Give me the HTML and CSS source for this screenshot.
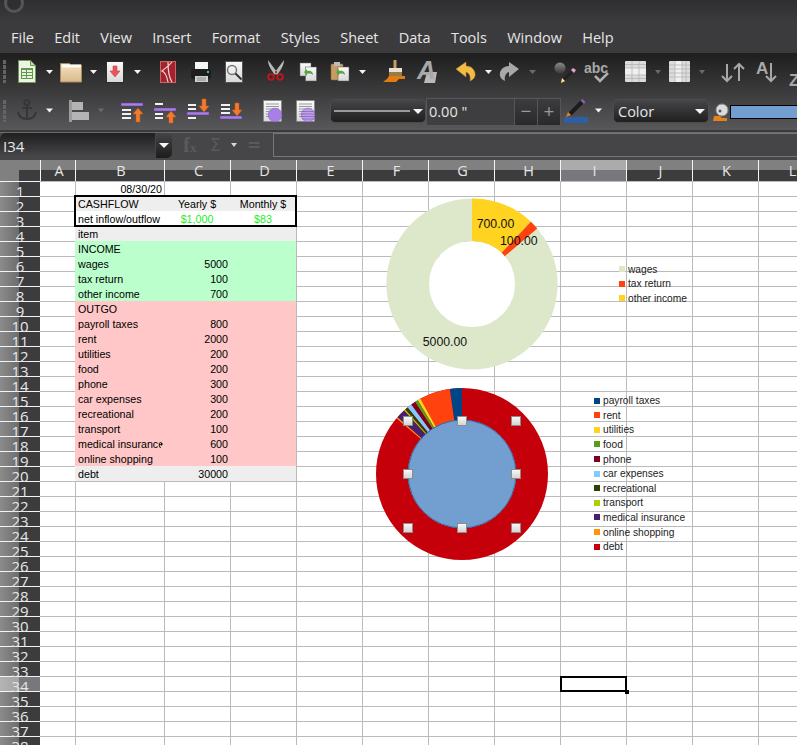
FILE: index.html
```html
<!DOCTYPE html>
<html lang="en">

<head>
    <meta charset="UTF-8">
    <meta name="viewport" content="width=device-width, initial-scale=1.0">
    <title>cashflow - Calc</title>
    <link rel="stylesheet" href="styles.css">
</head>

<body>
    <div class="titlebar"><span class="window-icon"></span></div>

    <nav class="menubar">
        <span>File</span><span>Edit</span><span>View</span><span>Insert</span><span>Format</span><span>Styles</span><span>Sheet</span><span>Data</span><span>Tools</span><span>Window</span><span>Help</span>
    </nav>

    <svg class="defs" width="0" height="0">
        <defs>
            <linearGradient id="page" x1="0" y1="0" x2="0" y2="1"><stop offset="0" stop-color="#fafafa"/><stop offset="1" stop-color="#d8d8d8"/></linearGradient>
            <linearGradient id="folder" x1="0" y1="0" x2="0" y2="1"><stop offset="0" stop-color="#f6e2c2"/><stop offset="1" stop-color="#d9b98c"/></linearGradient>
            <linearGradient id="ball" x1="0" y1="0" x2="0" y2="1"><stop offset="0" stop-color="#8a8a8a"/><stop offset="1" stop-color="#3a3a3a"/></linearGradient>
            <linearGradient id="handle" x1="0" y1="0" x2="0" y2="1"><stop offset="0" stop-color="#fafafa"/><stop offset="1" stop-color="#d2d2d2"/></linearGradient>
        </defs>
    </svg>

    <div class="toolbars">
        <!-- standard toolbar, icons use page coordinates in their viewBox -->
        <div class="toolbar">
            <svg class="tool" width="10" height="38" viewBox="0 53 10 38"><path class="grip" d="M3 60h3v4H3zM3 65h3v4H3zM3 70h3v4H3zM3 75h3v4H3zM3 80h3v3H3z"/></svg>
            <svg class="tool" width="33" height="38" viewBox="10 53 33 38">
                <path d="M18.5 60.5h12l5 5v17h-17z" fill="#eef3e6" stroke="#6c9a56"/>
                <path d="M30.5 60.5v5h5z" fill="#c4d8b4" stroke="#6c9a56"/>
                <rect x="21" y="68" width="12" height="11" fill="#5f9a4c"/>
                <path d="M22 70h4v2h-4zM27 70h5v2h-5zM22 73h4v2h-4zM27 73h5v2h-5zM22 76h4v2h-4zM27 76h5v2h-5z" fill="#e6f2de"/>
            </svg>
            <svg class="tool" width="12" height="38" viewBox="43 53 12 38"><polygon class="arrow" points="46,70 53,70 49.5,74"/></svg>
            <svg class="tool" width="32" height="38" viewBox="55 53 32 38">
                <path d="M60.5 65v-1.5h9l1 1.5h11v17h-21z" fill="url(#folder)" stroke="#a98a5c"/>
                <rect x="62" y="64.500" width="19" height="3" fill="#fbfbf6"/>
            </svg>
            <svg class="tool" width="12" height="38" viewBox="87 53 12 38"><polygon class="arrow" points="90,70 97,70 93.500,74"/></svg>
            <svg class="tool" width="32" height="38" viewBox="99 53 32 38">
                <rect x="106.500" y="61.500" width="17" height="21" fill="url(#page)" stroke="#2c2c2c"/>
                <path d="M113 66h4v5h3l-5 6-5-6h3z" fill="#e8555c" stroke="#c9474c" stroke-width=".6"/>
            </svg>
            <svg class="tool" width="19" height="38" viewBox="131 53 19 38"><polygon class="arrow" points="134,70 141,70 137.500,74"/></svg>
            <svg class="tool" width="34" height="38" viewBox="150 53 34 38">
                <rect x="160.500" y="61.500" width="15" height="21" fill="#a3222e" stroke="#c66"/>
                <path d="M172 62c-4 5-8 7-10 9 3 1 5 6 6 11M168 62c0 6 0 14 4 20" fill="none" stroke="#f0d8d8" stroke-width="1.200"/>
            </svg>
            <svg class="tool" width="34" height="38" viewBox="184 53 34 38">
                <rect x="195" y="62" width="13" height="9" fill="#f4f4f4"/>
                <rect x="191" y="69" width="20" height="10" rx="2" fill="#1e1e1e"/>
                <rect x="207" y="71" width="2" height="2" fill="#2fb5e0"/>
                <rect x="195" y="76" width="13" height="6" fill="#cfcfcf"/>
                <path d="M197 78h9M197 80h9" stroke="#888"/>
            </svg>
            <svg class="tool" width="40" height="38" viewBox="218 53 40 38">
                <rect x="225.500" y="61.500" width="17" height="21" fill="url(#page)" stroke="#555"/>
                <circle cx="232" cy="70" r="4.500" fill="#eee" stroke="#777" stroke-width="1.500"/>
                <path d="M235.500 73.500l6 6" stroke="#333" stroke-width="2"/>
            </svg>
            <svg class="tool" width="34" height="38" viewBox="258 53 34 38">
                <path d="M268 60c0 6 4 11 7 15l2-3zM284 60c0 6-4 11-7 15l-2-3z" fill="#b8b8b8"/>
                <circle cx="271" cy="77" r="2.800" fill="none" stroke="#d01218" stroke-width="1.700"/>
                <circle cx="280" cy="77" r="2.800" fill="none" stroke="#d01218" stroke-width="1.700"/>
            </svg>
            <svg class="tool" width="32" height="38" viewBox="292 53 32 38">
                <rect x="300" y="63" width="11" height="13" fill="url(#page)" stroke="#666" stroke-width=".5"/>
                <rect x="305.500" y="67" width="11" height="14" fill="url(#page)" stroke="#555" stroke-width=".5"/>
                <path d="M304 72l3-3v2c4-1 6 1 6 4-1-1-3-2-6-1v2z" fill="#55a83a"/>
            </svg>
            <svg class="tool" width="32" height="38" viewBox="324 53 32 38">
                <rect x="331" y="64" width="12" height="16" rx="1" fill="#c69c62" stroke="#8f7040" stroke-width=".5"/>
                <rect x="334" y="62" width="6" height="4" fill="#bbb"/>
                <rect x="338" y="67" width="11" height="14" fill="url(#page)" stroke="#555" stroke-width=".5"/>
                <path d="M336 72l3-3v2c4-1 6 1 6 4-1-1-3-2-6-1v2z" fill="#55a83a"/>
            </svg>
            <svg class="tool" width="16" height="38" viewBox="356 53 16 38"><polygon class="arrow" points="359,70 366,70 362.500,74"/></svg>
            <svg class="tool" width="39" height="38" viewBox="372 53 39 38">
                <rect x="393.500" y="60" width="3" height="9" fill="#c9a062"/>
                <rect x="389" y="68" width="13" height="4" fill="#e8e2d2"/>
                <rect x="389" y="72" width="13" height="4" fill="#9b7a48"/>
                <path d="M389 76h16v3h-6l-3 3h-13l4-3z" fill="#e07c10"/>
            </svg>
            <svg class="tool" width="39" height="38" viewBox="411 53 39 38">
                <path d="M427 72h10l-2 11h-11z" fill="#b9b9b9"/>
                <text class="tool-a" x="417" y="79">A</text>
            </svg>
            <svg class="tool" width="31" height="38" viewBox="450 53 31 38">
                <path d="M456 69l10-7v4c6 0 10 5 9 10-1 3-3 4-5 5 1-5-1-8-4-9v5z" fill="#f2bc44" stroke="#b8862a" stroke-width=".5"/>
            </svg>
            <svg class="tool" width="14" height="38" viewBox="481 53 14 38"><polygon class="arrow" points="485,70 492,70 488.500,74"/></svg>
            <svg class="tool" width="30" height="38" viewBox="495 53 30 38">
                <path d="M519 69l-10-7v4c-6 0-10 5-9 10 1 3 3 4 5 5-1-5 1-8 4-9v5z" fill="#a8a8a8"/>
            </svg>
            <svg class="tool" width="20" height="38" viewBox="525 53 20 38"><polygon class="arrow dim" points="529,70 536,70 532.500,74"/></svg>
            <svg class="tool" width="35" height="38" viewBox="545 53 35 38">
                <circle cx="560" cy="68" r="5.500" fill="url(#ball)"/>
                <path d="M573 71l-11 10" stroke="#222" stroke-width="3"/>
                <path d="M562 78l3 3-4 2z" fill="#ffe98a"/>
                <path d="M571 70l2-2 3 2-2 3z" fill="#e8a0d8"/>
            </svg>
            <svg class="tool" width="38" height="38" viewBox="580 53 38 38">
                <text class="tool-abc" x="584" y="73">abc</text>
                <path d="M595 76l5 5 8-8" fill="none" stroke="#b0b0b0" stroke-width="2.500"/>
            </svg>
            <svg class="tool" width="33" height="38" viewBox="618 53 33 38">
                <rect x="625" y="61" width="21" height="21" rx="1" fill="#dcdcdc"/>
                <rect x="625" y="68" width="21" height="7" fill="#f0f0f0"/>
                <path d="M625 68h21M625 75h21M625 78.500h21M625 64.500h21M632 61v21M639 61v21" stroke="#b4b4b4" stroke-width=".8"/>
            </svg>
            <svg class="tool" width="13" height="38" viewBox="651 53 13 38"><polygon class="arrow dim" points="655,70 661,70 658,74"/></svg>
            <svg class="tool" width="32" height="38" viewBox="664 53 32 38">
                <rect x="669" y="61" width="21" height="21" rx="1" fill="#dcdcdc"/>
                <rect x="675" y="61" width="7" height="21" fill="#f0f0f0"/>
                <path d="M675 61v21M682 61v21M686 61v21M669 65h21M669 69h21M669 73h21M669 77h21" stroke="#b4b4b4" stroke-width=".8"/>
            </svg>
            <svg class="tool" width="16" height="38" viewBox="696 53 16 38"><polygon class="arrow dim" points="699,70 705,70 702,74"/></svg>
            <svg class="tool" width="40" height="38" viewBox="712 53 40 38">
                <path d="M727 64v17M722 76l5 5 5-5M739 81V64M734 69l5-5 5 5" fill="none" stroke="#a8a8a8" stroke-width="2"/>
            </svg>
            <svg class="tool" width="33" height="38" viewBox="752 53 33 38">
                <text class="tool-sort" x="756" y="74">A</text>
                <path d="M771 63v18M766 76l5 5 5-5" fill="none" stroke="#a8a8a8" stroke-width="2"/>
            </svg>
            <svg class="tool" width="12" height="38" viewBox="785 53 12 38"><text class="tool-sort" x="789" y="86">Z</text></svg>
        </div>

        <!-- drawing object toolbar -->
        <div class="toolbar">
            <svg class="tool" width="10" height="39" viewBox="0 91 10 39"><path class="grip" d="M3 100h3v4H3zM3 105h3v4H3zM3 110h3v4H3zM3 115h3v4H3zM3 120h3v2H3z"/></svg>
            <svg class="tool" width="33" height="39" viewBox="10 91 33 39">
                <g fill="none" stroke="#363638" stroke-width="2">
                    <circle cx="27" cy="102.500" r="2.500"/>
                    <path d="M27 105v14M22 108h10M18 112c1 5 5 7 9 7s8-2 9-7"/>
                </g>
            </svg>
            <svg class="tool" width="12" height="39" viewBox="43 91 12 39"><polygon class="arrow" points="46,108.500 53,108.500 49.500,112.500"/></svg>
            <svg class="tool" width="40" height="39" viewBox="55 91 40 39">
                <rect x="69" y="100" width="3" height="22" fill="#9c9c9c"/>
                <rect x="72" y="102" width="11" height="8" fill="#b4b4b4"/>
                <rect x="72" y="112" width="17" height="8" fill="#b4b4b4"/>
            </svg>
            <svg class="tool" width="20" height="39" viewBox="95 91 20 39"><polygon class="arrow dim" points="98,108.500 104,108.500 101,112.500"/></svg>
            <svg class="tool" width="33" height="39" viewBox="115 91 33 39">
                <rect x="121" y="103" width="22" height="3" fill="#a77fe0" stroke="#5a3a9a" stroke-width=".5"/>
                <path class="text-lines" d="M122 110h9M122 114h9M122 118h9"/>
                <path class="move-arrow" d="M138 108l5 6h-3v8h-4v-8h-3z"/>
            </svg>
            <svg class="tool" width="33" height="39" viewBox="148 91 33 39">
                <path class="text-lines" d="M155 104h8M155 114h8M155 118h8"/>
                <rect x="154" y="108" width="22" height="3" fill="#a77fe0" stroke="#5a3a9a" stroke-width=".5"/>
                <path class="move-arrow" d="M171 111l5 6h-3v6h-4v-6h-3z"/>
            </svg>
            <svg class="tool" width="33" height="39" viewBox="181 91 33 39">
                <path class="text-lines" d="M188 105h8M188 109h8M188 118h8"/>
                <rect x="187" y="112" width="22" height="3" fill="#a77fe0" stroke="#5a3a9a" stroke-width=".5"/>
                <path class="move-arrow" d="M204 112l5-6h-3v-7h-4v7h-3z"/>
            </svg>
            <svg class="tool" width="36" height="39" viewBox="214 91 36 39">
                <path class="text-lines" d="M221 105h9M221 109h9M221 113h9"/>
                <rect x="220" y="116" width="22" height="3" fill="#a77fe0" stroke="#5a3a9a" stroke-width=".5"/>
                <path class="move-arrow" d="M237 116l5-6h-3v-7h-4v7h-3z"/>
            </svg>
            <svg class="tool" width="33" height="39" viewBox="250 91 33 39">
                <rect x="263.500" y="100.500" width="18" height="21" fill="url(#page)" stroke="#777" stroke-width=".5"/>
                <path d="M266 104h13M266 106.500h13M266 109h13M266 111.500h8M266 114h6M266 116.500h6" stroke="#999"/>
                <circle cx="275" cy="115" r="6.800" fill="#a97fe6" stroke="#8a62c8" stroke-width=".6"/>
            </svg>
            <svg class="tool" width="47" height="39" viewBox="283 91 47 39">
                <rect x="296.500" y="100.500" width="18" height="21" fill="url(#page)" stroke="#777" stroke-width=".5"/>
                <path d="M299 104h13M299 106.500h13M299 109h13M299 111.500h8M299 114h6M299 116.500h6" stroke="#999"/>
                <circle cx="308" cy="115" r="6.800" fill="#a97fe6" fill-opacity=".65" stroke="#8a62c8" stroke-width=".6"/>
                <path d="M302 111.500h12M301 114h14M301 116.500h14M302 119h12" stroke="#8a62c8" stroke-width=".8"/>
            </svg>

            <div class="combo line-combo"><span class="line-sample"></span><span class="combo-arrow"></span></div>

            <div class="spin">
                <span class="spin-value">0.00 "</span>
                <span class="spin-btn">−</span>
                <span class="spin-btn">+</span>
            </div>

            <svg class="tool" width="42" height="39" viewBox="561 91 42 39">
                <rect x="564" y="117" width="24" height="6" fill="#2d5fa6"/>
                <path d="M570 114l12-12" stroke="#1c1c1c" stroke-width="4"/>
                <path d="M566 117l2-5 3 3z" fill="#e8801c"/>
                <path d="M580.500 100.500l2-1.500 3 3-1.500 2z" fill="#8a5cc0"/>
                <polygon class="arrow" points="595,108.500 602,108.500 598.500,112.500"/>
            </svg>
            <div class="combo color-combo"><span class="combo-label">Color</span><span class="combo-arrow"></span></div>
            <svg class="tool" width="21" height="39" viewBox="709 91 21 39">
                <circle cx="722" cy="110" r="6" fill="#dcdcdc" stroke="#8a8a8a"/>
                <circle cx="720" cy="111" r="1.500" fill="#555"/>
                <path d="M714 116h6l2 2h5v3h-14z" fill="#e8801c"/>
            </svg>
            <div class="fill-swatch"></div>
        </div>
    </div>

    <div class="formulabar">
        <div class="namebox">I34</div>
        <div class="namebox-drop"><span class="combo-arrow"></span></div>
        <span class="fx">f<small>x</small></span>
        <span class="sigma">Σ</span>
        <span class="sigma-arrow"></span>
        <span class="equals">=</span>
        <div class="formula-input"></div>
    </div>

    <div class="col-headers">
        <div class="corner"></div>
        <div class="col col-a">A</div>
        <div class="col col-b">B</div>
        <div class="col">C</div>
        <div class="col">D</div>
        <div class="col">E</div>
        <div class="col">F</div>
        <div class="col">G</div>
        <div class="col">H</div>
        <div class="col current">I</div>
        <div class="col">J</div>
        <div class="col">K</div>
        <div class="col">L</div>
    </div>

    <div class="sheet-area">
        <div class="row-headers">
            <div>1</div><div>2</div><div>3</div><div>4</div><div>5</div><div>6</div><div>7</div><div>8</div><div>9</div><div>10</div>
            <div>11</div><div>12</div><div>13</div><div>14</div><div>15</div><div>16</div><div>17</div><div>18</div><div>19</div><div>20</div>
            <div>21</div><div>22</div><div>23</div><div>24</div><div>25</div><div>26</div><div>27</div><div>28</div><div>29</div><div>30</div>
            <div>31</div><div>32</div><div>33</div><div class="current">34</div><div>35</div><div>36</div><div>37</div><div>38</div>
        </div>

        <div class="sheet">
            <div class="cells">
                <div class="row">
                    <span class="num">08/30/20</span><span></span><span></span>
                </div>
                <div class="summary">
                    <div class="row gray">
                        <span>CASHFLOW</span><span class="mid">Yearly $</span><span class="mid">Monthly $</span>
                    </div>
                    <div class="row white">
                        <span>net inflow/outflow</span><span class="mid money">$1,000</span><span class="mid money">$83</span>
                    </div>
                </div>
                <div class="row gray"><span>item</span><span></span><span></span></div>
                <div class="row green"><span>INCOME</span><span></span><span></span></div>
                <div class="row green"><span>wages</span><span class="num">5000</span><span></span></div>
                <div class="row green"><span>tax return</span><span class="num">100</span><span></span></div>
                <div class="row green"><span>other income</span><span class="num">700</span><span></span></div>
                <div class="row pink"><span>OUTGO</span><span></span><span></span></div>
                <div class="row pink"><span>payroll taxes</span><span class="num">800</span><span></span></div>
                <div class="row pink"><span>rent</span><span class="num">2000</span><span></span></div>
                <div class="row pink"><span>utilities</span><span class="num">200</span><span></span></div>
                <div class="row pink"><span>food</span><span class="num">200</span><span></span></div>
                <div class="row pink"><span>phone</span><span class="num">300</span><span></span></div>
                <div class="row pink"><span>car expenses</span><span class="num">300</span><span></span></div>
                <div class="row pink"><span>recreational</span><span class="num">200</span><span></span></div>
                <div class="row pink"><span>transport</span><span class="num">100</span><span></span></div>
                <div class="row pink"><span class="cut"><b>medical insurance</b></span><span class="num">600</span><span></span></div>
                <div class="row pink"><span>online shopping</span><span class="num">100</span><span></span></div>
                <div class="row gray"><span>debt</span><span class="num">30000</span><span></span></div>
            </div>

            <!-- income chart -->
            <svg class="chart chart-income" width="180" height="180" viewBox="-90 -90 180 180">
                <circle r="43" fill="#fff"/>
                <g transform="rotate(-90)" fill="none" stroke-width="42.600">
                    <circle r="64.300" pathLength="5800" stroke="#dde8cb"/>
                    <circle r="64.300" pathLength="5800" stroke="#ffd320" stroke-dasharray="700 5100"/>
                    <circle r="64.300" pathLength="5800" stroke="#ff420e" stroke-dasharray="100 5700" stroke-dashoffset="-700"/>
                </g>
                <text class="chart-label" x="4.700" y="-55.700">700.00</text>
                <text class="chart-label" x="28" y="-39.500">100.00</text>
                <text class="chart-label" x="-49.300" y="62">5000.00</text>
            </svg>
            <ul class="legend legend-income">
                <li><i class="c-wages"></i>wages</li>
                <li><i class="c-rent"></i>tax return</li>
                <li><i class="c-utilities"></i>other income</li>
            </ul>

            <!-- outgo chart, slices run anticlockwise from the top -->
            <svg class="chart chart-outgo" width="180" height="180" viewBox="-90 -90 180 180">
                <g transform="rotate(-90) scale(1 -1)" fill="none" stroke-width="32">
                    <circle r="70" pathLength="34800" stroke="#c5000b"/>
                    <circle r="70" pathLength="34800" stroke="#004586" stroke-dasharray="800 34000"/>
                    <circle r="70" pathLength="34800" stroke="#ff420e" stroke-dasharray="2000 32800" stroke-dashoffset="-800"/>
                    <circle r="70" pathLength="34800" stroke="#ffd320" stroke-dasharray="200 34600" stroke-dashoffset="-2800"/>
                    <circle r="70" pathLength="34800" stroke="#579d1c" stroke-dasharray="200 34600" stroke-dashoffset="-3000"/>
                    <circle r="70" pathLength="34800" stroke="#7e0021" stroke-dasharray="300 34500" stroke-dashoffset="-3200"/>
                    <circle r="70" pathLength="34800" stroke="#83caff" stroke-dasharray="300 34500" stroke-dashoffset="-3500"/>
                    <circle r="70" pathLength="34800" stroke="#314004" stroke-dasharray="200 34600" stroke-dashoffset="-3800"/>
                    <circle r="70" pathLength="34800" stroke="#aecf00" stroke-dasharray="100 34700" stroke-dashoffset="-4000"/>
                    <circle r="70" pathLength="34800" stroke="#4b1f6f" stroke-dasharray="600 34200" stroke-dashoffset="-4100"/>
                    <circle r="70" pathLength="34800" stroke="#ff950e" stroke-dasharray="100 34700" stroke-dashoffset="-4700"/>
                </g>
                <circle r="54" fill="#729fcf" stroke="#3465a4"/>
                <g class="handles">
                    <rect x="-58.500" y="-57.500" width="9" height="9"/><rect x="-4.500" y="-57.500" width="9" height="9"/><rect x="49.500" y="-57.500" width="9" height="9"/>
                    <rect x="-58.500" y="-4.500" width="9" height="9"/><rect x="49.500" y="-4.500" width="9" height="9"/>
                    <rect x="-58.500" y="49.500" width="9" height="9"/><rect x="-4.500" y="49.500" width="9" height="9"/><rect x="49.500" y="49.500" width="9" height="9"/>
                </g>
            </svg>
            <ul class="legend legend-outgo">
                <li><i class="c-payroll"></i>payroll taxes</li>
                <li><i class="c-rent"></i>rent</li>
                <li><i class="c-utilities"></i>utilities</li>
                <li><i class="c-food"></i>food</li>
                <li><i class="c-phone"></i>phone</li>
                <li><i class="c-car"></i>car expenses</li>
                <li><i class="c-recreational"></i>recreational</li>
                <li><i class="c-transport"></i>transport</li>
                <li><i class="c-medical"></i>medical insurance</li>
                <li><i class="c-online"></i>online shopping</li>
                <li><i class="c-debt"></i>debt</li>
            </ul>

            <div class="cursor"></div>
        </div>
    </div>
</body>

</html>
```

FILE: styles.css
```css
html,
body {
    margin: 0;
    padding: 0;
}

body {
    width: 797px;
    height: 745px;
    overflow: hidden;
    background-color: #3a3a3d;
    font-family: 'Open Sans', sans-serif;
    color: #e6e6e6;
}

.defs {
    position: absolute;
}

/* Title and menu */
.titlebar {
    height: 22px;
    overflow: hidden;
    background: linear-gradient(#2f2f31, #3b3b3d);
}

.window-icon {
    display: block;
    width: 14px;
    height: 14px;
    margin: -7px 0 0 4px;
    border: 3px solid #555;
    border-radius: 50%;
    background-color: #2f2f31;
}

.menubar {
    height: 31px;
    box-sizing: border-box;
    padding: 4px 0 0 11px;
    display: flex;
    gap: 20.3px;
    font-size: 14.5px;
    line-height: 24px;
    background-color: #3b3b3d;
}

/* Toolbars */
.toolbars {
    height: 77px;
    background: linear-gradient(#1e1e1f, #58585a);
}

.toolbar {
    display: flex;
    height: 38px;
}

.toolbar:last-child {
    height: 39px;
}

.tool {
    display: block;
    flex: none;
}

.grip {
    fill: #646464;
}

.arrow {
    fill: #f4f4f4;
}

.arrow.dim {
    fill: #6a6a6a;
}

.text-lines {
    fill: none;
    stroke: #f2f2f2;
    stroke-width: 2;
}

.move-arrow {
    fill: #f27a2a;
    stroke: #c85a18;
    stroke-width: 0.5;
}

.tool-a {
    font: italic bold 26px 'Liberation Sans', sans-serif;
    fill: #a8a8a8;
}

.tool-abc {
    font: bold 14px 'Liberation Sans', sans-serif;
    fill: #a8a8a8;
}

.tool-sort {
    font: bold 17px 'Liberation Sans', sans-serif;
    fill: #a8a8a8;
}

.combo {
    box-sizing: border-box;
    height: 24px;
    margin-top: 8px;
    display: flex;
    align-items: center;
    border: 1px solid #4c4c4e;
    border-radius: 5px;
    background: linear-gradient(#464648, #1f1f20);
}

.combo-arrow {
    display: block;
    width: 0;
    height: 0;
    border-left: 5px solid transparent;
    border-right: 5px solid transparent;
    border-top: 5px solid #f4f4f4;
}

.line-combo {
    width: 96px;
    flex: none;
    padding: 0 2px 0 3px;
}

.line-sample {
    display: block;
    width: 80px;
    height: 2px;
    margin-right: 3px;
    background-color: #9a9a9a;
}

.spin {
    box-sizing: border-box;
    flex: none;
    width: 135px;
    height: 28px;
    margin-top: 7px;
    display: flex;
    border: 1px solid #565658;
    background-color: #3e3e40;
    font-size: 14.5px;
    line-height: 25px;
}

.spin-value {
    flex: 1;
    padding-left: 2px;
}

.spin-btn {
    width: 22px;
    border-left: 1px solid #555;
    text-align: center;
    color: #999;
    font-size: 19px;
    background: linear-gradient(#3c3c3e, #2a2a2c);
}

.color-combo {
    width: 96px;
    flex: none;
    padding: 0 3px 0 4px;
    margin-left: 10px;
    justify-content: space-between;
    font-size: 14.5px;
}

.fill-swatch {
    flex: 1;
    height: 12px;
    margin-top: 14px;
    border: 1px solid #000;
    border-right: 0;
    background-color: #729fcf;
}

/* Formula bar */
.formulabar {
    box-sizing: border-box;
    height: 28px;
    margin-top: 2px;
    display: flex;
    align-items: flex-start;
    border-top: 1px solid #6a6a6c;
    background-color: #464648;
}

.namebox {
    box-sizing: border-box;
    flex: none;
    width: 155px;
    height: 25px;
    padding-left: 3px;
    font-size: 15px;
    line-height: 26px;
    border-radius: 6px 0 0 6px;
    background: linear-gradient(#1f1f20, #48484a);
}

.namebox-drop {
    flex: none;
    width: 16px;
    height: 25px;
    margin-left: 1px;
    display: flex;
    align-items: center;
    justify-content: center;
    border-radius: 0 5px 5px 0;
    background: linear-gradient(#444446, #1c1c1d);
}

.fx {
    flex: none;
    width: 18px;
    margin-left: 11px;
    font: bold 21px/24px 'Liberation Serif', serif;
    color: #5a5a5c;
}

.fx small {
    font-size: 13px;
}

.sigma {
    flex: none;
    width: 11px;
    margin-left: 9px;
    font: 17px/24px 'DejaVu Sans', sans-serif;
    color: #5a5a5c;
}

.sigma-arrow {
    flex: none;
    width: 0;
    height: 0;
    margin: 10px 0 0 10px;
    border-left: 3px solid transparent;
    border-right: 3px solid transparent;
    border-top: 4px solid #d8d8d8;
}

.equals {
    flex: none;
    width: 11px;
    margin-left: 10px;
    font: bold 17px/24px 'DejaVu Sans', sans-serif;
    color: #5a5a5c;
}

.formula-input {
    flex: 1;
    height: 24px;
    margin-left: 15px;
    box-sizing: border-box;
    border: 1px solid #767678;
    border-right: 0;
    background-color: #454547;
}

/* Headers */
.col-headers {
    display: flex;
    height: 21px;
    background: linear-gradient(#808080 0, #808080 10px, #3c3c3e 10px);
    overflow: hidden;
}

.corner {
    flex: none;
    width: 40px;
    background: linear-gradient(to right, #808080 19px, transparent 19px);
}

.col {
    flex: none;
    width: 65px;
    box-sizing: content-box;
    border-left: 1px solid #f4f4f4;
    text-align: center;
    text-indent: 2px;
    font-size: 14.5px;
    line-height: 22px;
}

.col-a {
    width: 34px;
}

.col-b {
    width: 88px;
}

.col.current {
    background: linear-gradient(#ababab 0, #ababab 10px, #78787c 10px);
}

.sheet-area {
    display: flex;
    height: 564px;
}

.row-headers {
    flex: none;
    width: 40px;
    background: linear-gradient(to right, #8c8c8c, #6c6c6c 19px, #3c3c3e 19px);
}

.row-headers div {
    box-sizing: border-box;
    height: 15px;
    border-top: 1px solid #f4f4f4;
    text-align: center;
    font-size: 15px;
    line-height: 18px;
}

.row-headers .current {
    background: linear-gradient(to right, #b4b4b4, #a4a4a4 19px, #78787c 19px);
}

/* Grid */
.sheet {
    position: relative;
    flex: 1;
    overflow: hidden;
    background-color: #fff;
    background-image:
        linear-gradient(#bbb, #bbb),
        linear-gradient(#bbb, #bbb),
        repeating-linear-gradient(to right, #bbb 0, #bbb 1px, transparent 1px, transparent 66px),
        repeating-linear-gradient(to bottom, #bbb 0, #bbb 1px, transparent 1px, transparent 15px);
    background-repeat: no-repeat;
    background-size: 1px 100%, 1px 100%, 600px 100%, 100% 100%;
    background-position: 35px 0, 124px 0, 190px 0, 0 0;
}

.cells {
    width: 221px;
    margin-left: 35px;
    font-family: 'Liberation Sans', sans-serif;
    font-size: 10.7px;
    color: #000;
}

.row {
    display: grid;
    grid-template-columns: 89px 66px 66px;
    height: 15px;
    line-height: 16px;
}

.row span {
    padding: 0 2px 0 3px;
    white-space: nowrap;
}

.row .num {
    text-align: right;
}

.row .mid {
    padding: 0;
    text-align: center;
}

.row .money {
    color: #1cf01c;
}

.row .cut {
    position: relative;
}

.row .cut b {
    display: block;
    width: 83px;
    overflow: hidden;
    font-weight: normal;
}

.row .cut::after {
    content: '';
    position: absolute;
    left: 86px;
    top: 6px;
    border-left: 2px solid #000;
    border-top: 2px solid transparent;
    border-bottom: 2px solid transparent;
}

.summary {
    outline: 2px solid #000;
    outline-offset: -1px;
    position: relative;
}

.gray {
    background-color: #eee;
}

.white {
    background-color: #fff;
}

.green {
    background-color: #bbffcc;
}

.pink {
    background-color: #ffc7c7;
}

/* Charts sit on top of the grid */
.chart {
    position: absolute;
}

.chart-income {
    left: 342.300px;
    top: 12.700px;
}

.chart-outgo {
    left: 331.700px;
    top: 202.700px;
}

.chart-label {
    font: 12.300px 'Liberation Sans', sans-serif;
    fill: #111;
}

.handles rect {
    fill: url(#handle);
    stroke: #8c8c8c;
}

.legend {
    position: absolute;
    margin: 0;
    padding: 0;
    list-style: none;
    font-family: 'Liberation Sans', sans-serif;
    font-size: 10.2px;
    color: #222;
}

.legend li {
    display: flex;
    align-items: center;
    height: 14.600px;
}

.legend i {
    flex: none;
    width: 6px;
    height: 6px;
    margin-right: 3px;
}

.legend-income {
    left: 579px;
    top: 81px;
}

.legend-outgo {
    left: 554px;
    top: 212.400px;
}

.c-wages { background-color: #dde8cb; }
.c-payroll { background-color: #004586; }
.c-rent { background-color: #ff420e; }
.c-utilities { background-color: #ffd320; }
.c-food { background-color: #579d1c; }
.c-phone { background-color: #7e0021; }
.c-car { background-color: #83caff; }
.c-recreational { background-color: #314004; }
.c-transport { background-color: #aecf00; }
.c-medical { background-color: #4b1f6f; }
.c-online { background-color: #ff950e; }
.c-debt { background-color: #c5000b; }

.cursor {
    position: absolute;
    left: 520px;
    top: 495px;
    width: 63px;
    height: 12px;
    border: 2px solid #000;
}

.cursor::after {
    content: '';
    position: absolute;
    right: -4px;
    bottom: -4px;
    width: 4px;
    height: 4px;
    background-color: #000;
}
```
